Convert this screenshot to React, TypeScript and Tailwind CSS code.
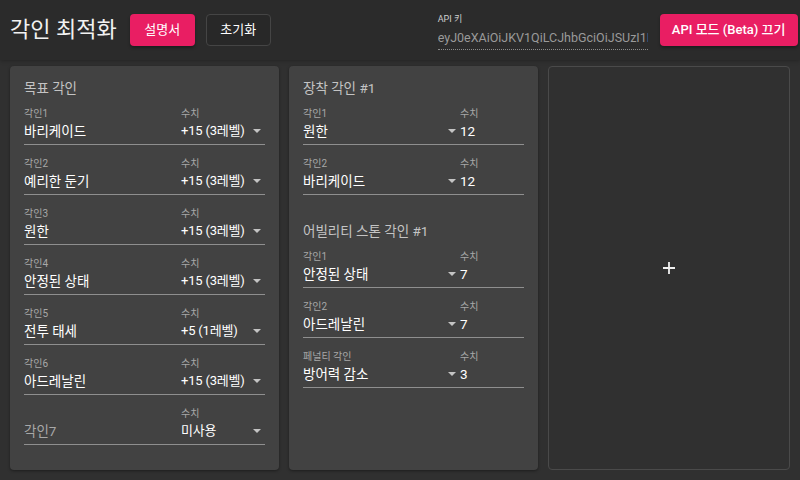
import React from "react"

type Row = { label: string; value: string; level: string; placeholder?: boolean }

const targetRows: Row[] = [
  { label: "각인1", value: "바리케이드", level: "+15 (3레벨)" },
  { label: "각인2", value: "예리한 둔기", level: "+15 (3레벨)" },
  { label: "각인3", value: "원한", level: "+15 (3레벨)" },
  { label: "각인4", value: "안정된 상태", level: "+15 (3레벨)" },
  { label: "각인5", value: "전투 태세", level: "+5 (1레벨)" },
  { label: "각인6", value: "아드레날린", level: "+15 (3레벨)" },
  { label: "각인7", value: "", level: "미사용", placeholder: true },
]

const equipRows: Row[] = [
  { label: "각인1", value: "원한", level: "12" },
  { label: "각인2", value: "바리케이드", level: "12" },
]

const stoneRows: Row[] = [
  { label: "각인1", value: "안정된 상태", level: "7" },
  { label: "각인2", value: "아드레날린", level: "7" },
  { label: "페널티 각인", value: "방어력 감소", level: "3" },
]

function Caret() {
  return (
    <svg width="8" height="4" viewBox="0 0 8 4" className="shrink-0">
      <path d="M0 0 L8 0 L4 4 Z" fill="#c4c4c4" />
    </svg>
  )
}

function TargetRow({ row }: { row: Row }) {
  return (
    <div className="mt-[13px] flex border-b border-[#8f8f8f] pb-[3px] first:mt-[10px]">
      <div className="flex w-[157px] flex-col">
        <div className="h-[12px] text-[10px] leading-[12px] text-[#a8a8a8]">{row.placeholder ? "" : row.label}</div>
        <div className={`mt-[1px] h-[20px] text-[13.5px] leading-[20px] ${row.placeholder ? "text-[#a8a8a8]" : "text-white"}`}>
          {row.placeholder ? row.label : row.value}
        </div>
      </div>
      <div className="flex flex-1 flex-col">
        <div className="h-[12px] text-[10px] leading-[12px] text-[#a8a8a8]">수치</div>
        <div className="mt-[1px] flex h-[20px] items-center justify-between pr-[4px] text-[13px] leading-[20px] text-white">
          <span className="tracking-[-0.2px]">{row.level}</span>
          <Caret />
        </div>
      </div>
    </div>
  )
}

function EquipRow({ row }: { row: Row }) {
  return (
    <div className="mt-[13px] flex border-b border-[#8f8f8f] pb-[3px] first:mt-[10px]">
      <div className="flex w-[145px] flex-col">
        <div className="h-[12px] text-[10px] leading-[12px] text-[#a8a8a8]">{row.label}</div>
        <div className="mt-[1px] h-[20px] text-[13.5px] leading-[20px] text-white">{row.value}</div>
      </div>
      <div className="flex flex-col">
        <div className="h-[12px] pl-[12px] text-[10px] leading-[12px] text-[#a8a8a8]">수치</div>
        <div className="mt-[1px] flex h-[20px] items-center gap-[4px] text-[13.5px] leading-[20px] text-white">
          <Caret />
          <span>{row.level}</span>
        </div>
      </div>
    </div>
  )
}

export default function App() {
  return (
    <div
      className="flex h-[480px] w-[800px] flex-col overflow-hidden bg-[#303030] text-white"
      style={{ fontFamily: "Roboto, 'Noto Sans CJK KR', sans-serif" }}
    >
      {/* Header */}
      <header className="flex h-[60px] shrink-0 items-center bg-[#2b2b2b] pl-[10px] shadow-[0_1px_4px_rgba(0,0,0,0.25)]">
        <h1 className="text-[22px] font-normal leading-[32px] text-[#f2f2f2]">각인 최적화</h1>
        <button className="ml-[13px] h-[32px] w-[65px] rounded-[4px] bg-[#e91e63] text-[13px] text-white shadow-[0_2px_3px_rgba(0,0,0,0.3)]">
          설명서
        </button>
        <button className="ml-[11px] h-[32px] w-[65px] rounded-[4px] border border-[#454545] bg-[#282828] text-[13px] text-white">
          초기화
        </button>
        <div className="ml-[167px] flex w-[210px] flex-col self-start pt-[13px]">
          <div className="text-[9px] leading-[12px] text-[#cfcfcf]">API 키</div>
          <div className="mt-[5px] overflow-hidden whitespace-nowrap border-b border-dotted border-[#8a8a8a] pb-[3px] text-[12.5px] leading-[16px] text-[#9a9a9a]">
            eyJ0eXAiOiJKV1QiLCJhbGciOiJSUzI1N
          </div>
        </div>
        <button className="ml-[12px] h-[32px] w-[138px] rounded-[4px] bg-[#e91e63] text-[13px] font-medium text-white shadow-[0_2px_3px_rgba(0,0,0,0.3)]">
          API 모드 (Beta) 끄기
        </button>
      </header>

      {/* Main */}
      <main className="flex flex-1 gap-[10px] px-[10px] pb-[10px] pt-[6px]">
        <section className="flex w-[269px] flex-col rounded-[4px] bg-[#424242] px-[14px] pt-[12px] shadow-[0_1px_3px_rgba(0,0,0,0.4)]">
          <h2 className="h-[20px] text-[13.5px] leading-[20px] text-[#c4c4c4]">목표 각인</h2>
          <div className="flex flex-col">
            {targetRows.map((r) => (
              <TargetRow key={r.label} row={r} />
            ))}
          </div>
        </section>

        <section className="flex w-[249px] flex-col rounded-[4px] bg-[#424242] px-[14px] pt-[12px] shadow-[0_1px_3px_rgba(0,0,0,0.4)]">
          <h2 className="h-[20px] text-[13.5px] leading-[20px] text-[#c4c4c4]">장착 각인 #1</h2>
          <div className="flex flex-col">
            {equipRows.map((r) => (
              <EquipRow key={r.label} row={r} />
            ))}
          </div>
          <h2 className="mt-[26px] h-[20px] text-[13.5px] leading-[20px] text-[#c4c4c4]">어빌리티 스톤 각인 #1</h2>
          <div className="flex flex-col">
            {stoneRows.map((r) => (
              <EquipRow key={r.label} row={r} />
            ))}
          </div>
        </section>

        <section className="flex flex-1 items-center justify-center rounded-[4px] border border-[#4a4a4a]">
          <svg width="14" height="14" viewBox="0 0 14 14">
            <path d="M7 1 V13 M1 7 H13" stroke="#f0f0f0" strokeWidth="1.8" />
          </svg>
        </section>
      </main>
    </div>
  )
}
